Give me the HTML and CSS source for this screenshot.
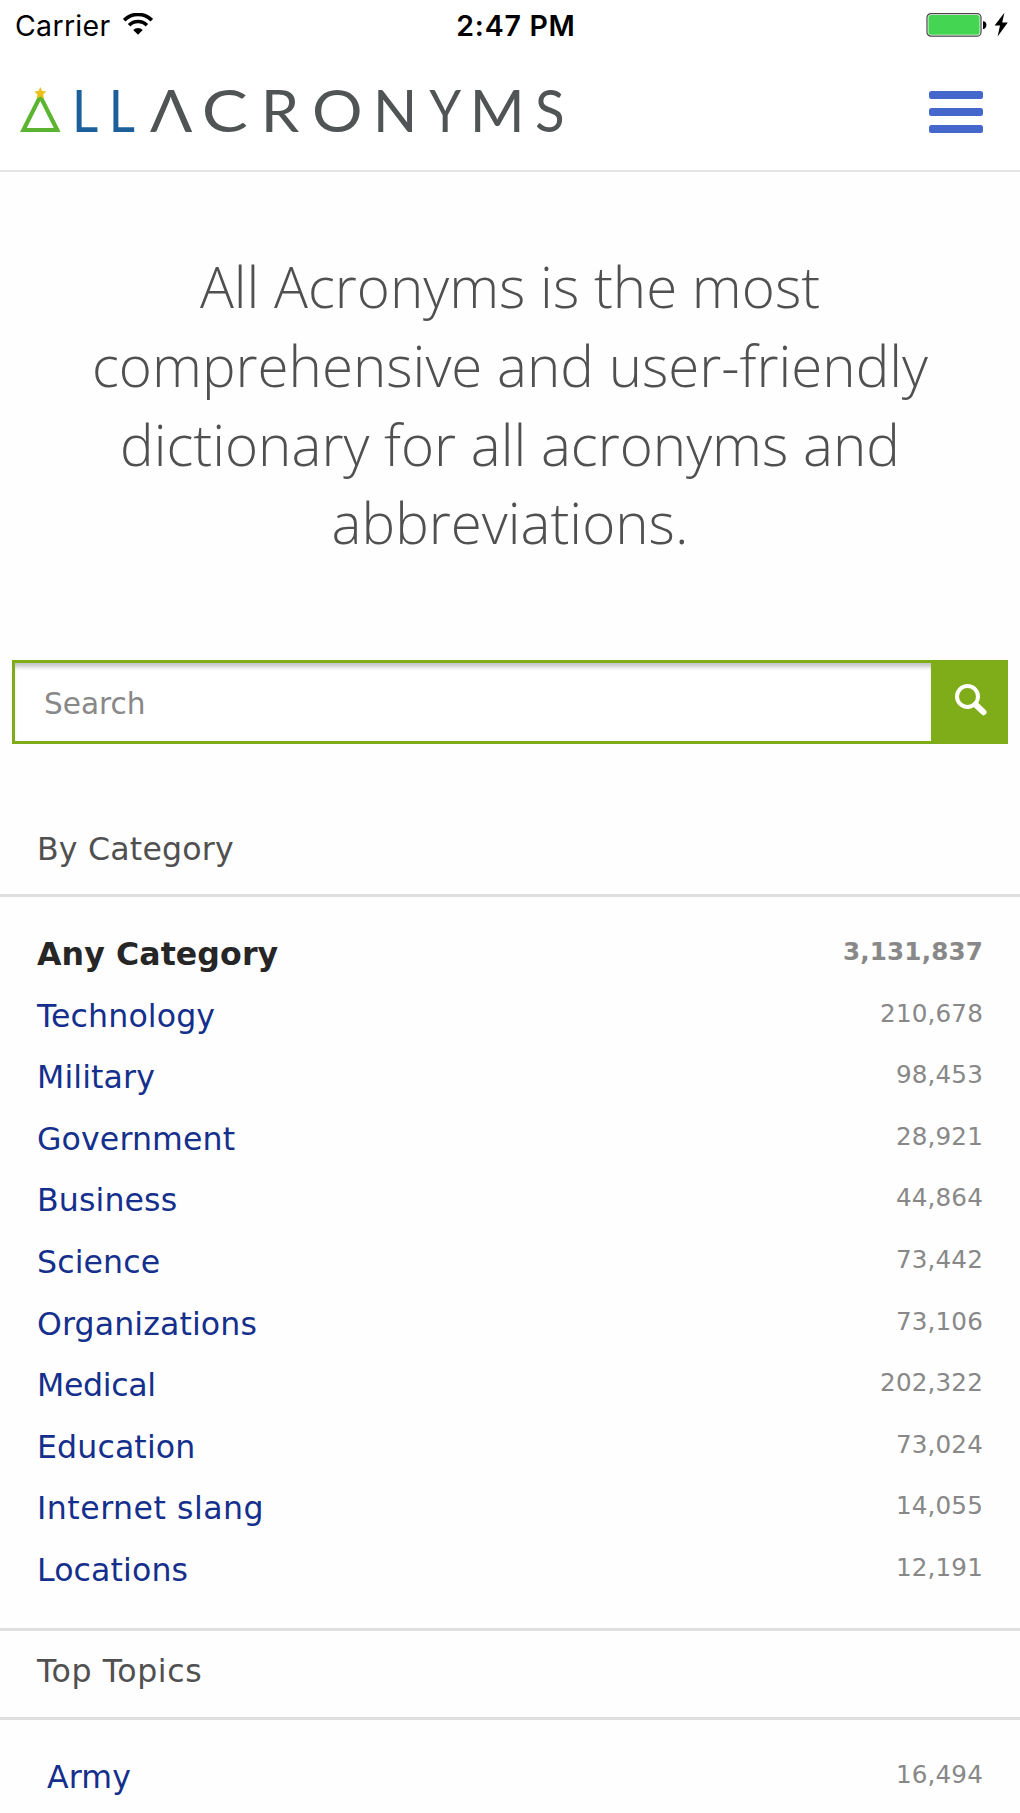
FILE: index.html
```html
<!DOCTYPE html>
<html lang="en">
<head>
<meta charset="utf-8">
<title>All Acronyms</title>
<link rel="stylesheet" href="styles.css">
</head>
<body>
<div class="status">
  <div class="status-left">
    <span class="carrier">Carrier</span>
    <svg class="wifi" width="30" height="22" viewBox="0 0 30 22" fill="none" stroke="#000" stroke-width="3.6">
      <path d="M1.2 7.2A19.4 19.4 0 0 1 28.8 7.2"/>
      <path d="M6.1 12.2A12.4 12.4 0 0 1 23.900 12.2"/>
      <path d="M15 21.700L10.200 17A6.800 6.800 0 0 1 19.800 17Z" fill="#000" stroke="none"/>
    </svg>
  </div>
  <span class="clock">2:47 PM</span>
  <div class="status-right">
    <svg width="84" height="26" viewBox="0 0 84 26">
      <rect x="1" y="1.600" width="54" height="22.600" rx="4" fill="#fff" stroke="#444" stroke-width="1.200"/>
      <rect x="2.400" y="3" width="51.200" height="19.800" rx="2.600" fill="#44d553"/>
      <path d="M57 9.200h1.200q2.300 1 2.300 3.900t-2.300 3.900h-1.200z" fill="#000"/>
      <path d="M78.400 .8L68.600 13.400H74L71.600 24.400L81.800 10.400H76.200Z" fill="#000"/>
    </svg>
  </div>
</div>
<header class="header">
  <svg class="logo" width="570" height="86" viewBox="0 -16 570 86">
    <path d="M20.300 12.400L37.200 46H3.400Z" fill="none" stroke="#5cb531" stroke-width="4.200"/>
    <path d="M20.300 3l1.800 3.900 4.200.5-3.100 3 .8 4.300-3.700-2.100-3.700 2.100.8-4.300-3.100-3 4.200-.5z" fill="#ecc018"/>
    <g class="logo-text logo-all">
      <text transform="translate(52 48.200) scale(.88 1)">L</text>
      <text transform="translate(88.700 48.200) scale(.88 1)">L</text>
    </g>
    <g class="logo-text">
      <text transform="translate(130 48.200) scale(1.080 1)">Λ</text>
      <text transform="translate(181.700 48.200) scale(1.190 1)">C</text>
      <text transform="translate(240.800 48.200) scale(1.060 1)">R</text>
      <text transform="translate(292 48.200) scale(1.090 1)">O</text>
      <text transform="translate(353 48.200)">N</text>
      <text transform="translate(409.200 48.200) scale(.88 1)">Y</text>
      <text transform="translate(449.700 48.200) scale(1.020 1)">M</text>
      <text transform="translate(515 48.200) scale(.94 1)">S</text>
    </g>
  </svg>
  <div class="menu"><i></i><i></i><i></i></div>
</header>
<main>
  <h1 class="tagline">All Acronyms is the most<br>comprehensive and user-friendly<br>dictionary for all acronyms and<br>abbreviations.</h1>
  <form class="search">
    <div class="search-field">Search</div>
    <div class="search-button">
      <svg width="34" height="34" viewBox="0 0 34 34" fill="none" stroke="#fff">
        <circle cx="14.500" cy="14.500" r="10.500" stroke-width="4"/>
        <path d="M22.500 22.500L30.500 30.200" stroke-width="6" stroke-linecap="round"/>
      </svg>
    </div>
  </form>
  <h2 class="section-title first">By Category</h2>
  <ul class="list categories">
    <li class="any"><span>Any Category</span><b>3,131,837</b></li>
    <li><a>Technology</a><b>210,678</b></li>
    <li><a>Military</a><b>98,453</b></li>
    <li><a>Government</a><b>28,921</b></li>
    <li><a>Business</a><b>44,864</b></li>
    <li><a>Science</a><b>73,442</b></li>
    <li><a>Organizations</a><b>73,106</b></li>
    <li><a class="tight">Medical</a><b>202,322</b></li>
    <li><a>Education</a><b>73,024</b></li>
    <li><a class="wide">Internet slang</a><b>14,055</b></li>
    <li><a>Locations</a><b>12,191</b></li>
  </ul>
  <h2 class="section-title topics">Top Topics</h2>
  <ul class="list indented">
    <li><a>Army</a><b>16,494</b></li>
  </ul>
</main>
</body>
</html>
```
FILE: styles.css
```css
* { box-sizing: border-box; }
html, body { margin: 0; height: 1813px; overflow: hidden; }
body {
  background: #fefefe;
  font-family: "DejaVu Sans", Verdana, sans-serif;
  color: #505050;
}
.status {
  display: grid;
  grid-template-columns: 1fr auto 1fr;
  height: 50px;
  padding: 0 10px 0 15px;
  background: #fff;
  color: #000;
  font: 400 28.500px/51px Inter, sans-serif;
}
.status-left { display: flex; gap: 12px; }
.carrier { letter-spacing: .3px; }
.wifi { margin-top: 13px; }
.clock { padding-left: 7px; font-weight: 600; letter-spacing: .75px; }
.status-right { display: flex; justify-content: flex-end; padding-top: 12px; }
.header {
  display: flex;
  justify-content: space-between;
  height: 122px;
  padding: 18px 37px 0 20px;
  background: #fff;
  border-bottom: 2px solid #e6e6e6;
}
.logo-text { font: 400 58px Lato, sans-serif; fill: #505455; }
.logo-all { fill: #1c5f9b; }
.menu { display: flex; flex-direction: column; gap: 9.500px; padding-top: 23px; }
.menu i { width: 54px; height: 7.700px; border-radius: 2.500px; background: #4467cb; }
.tagline {
  margin: 76px 0 0;
  height: 315px;
  text-align: center;
  white-space: nowrap;
  font: 300 56.500px/78.800px "Open Sans", sans-serif;
}
.search {
  display: flex;
  height: 84px;
  margin: 97px 12px 0;
  border: 3px solid #7fac19;
  background: #fff;
}
.search-field {
  flex: 1;
  padding-left: 29px;
  color: #888;
  font-size: 29.570px;
  line-height: 83px;
  box-shadow: inset 0 6px 4px -2px #c4c4c4;
}
.search-button {
  width: 74px;
  background: #7fac19;
  padding: 19px 0 0 22px;
}
.section-title {
  margin: 0;
  padding-left: 37px;
  border-bottom: 3px solid #dfdfdf;
  font-size: 31.600px;
  font-weight: 400;
  letter-spacing: .2px;
}
.first { height: 153px; padding-top: 80px; line-height: 50px; }
.topics { height: 92px; border-top: 3px solid #dfdfdf; line-height: 80px; letter-spacing: .6px; }
.list { margin: 0; padding: 27px 37px 0 37px; list-style: none; }
.categories { height: 731px; }
.list li {
  display: flex;
  justify-content: space-between;
  height: 61.600px;
  line-height: 61.600px;
  font-size: 31.600px;
}
.list a { color: #142f8c; letter-spacing: .12px; }
.list .tight { letter-spacing: -.35px; }
.list .wide { letter-spacing: .5px; }
.list b { color: #888; font-size: 24.640px; font-weight: 400; line-height: 56px; letter-spacing: .15px; }
.any span { font-weight: 700; color: #262626; letter-spacing: .1px; }
.list .any b { font-weight: 700; }
.indented { padding-left: 47px; }
```
